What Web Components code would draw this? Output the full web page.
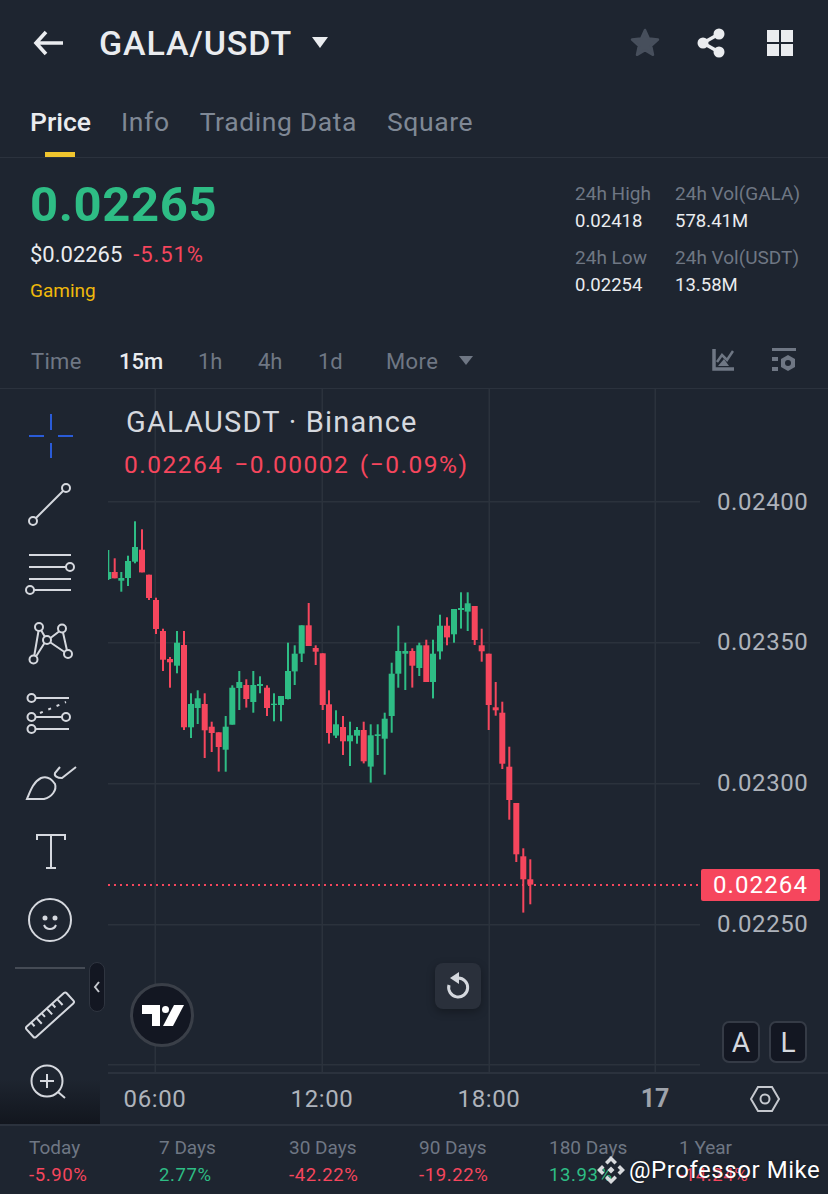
<!DOCTYPE html>
<html>
<head>
<meta charset="utf-8">
<title>GALA/USDT</title>
<style>
  html, body { margin: 0; background: #1e2530; }
  body { width: 828px; height: 1194px; overflow: hidden; font-family: Roboto, "Noto Sans", sans-serif; position: relative; }
</style>
</head>
<body>
<pair-header></pair-header>
<pair-tabs></pair-tabs>
<price-summary></price-summary>
<interval-bar></interval-bar>
<chart-panel></chart-panel>
<perf-strip></perf-strip>
<water-mark></water-mark>

<script>
class PairHeader extends HTMLElement {
  connectedCallback() {
    this.attachShadow({ mode: 'open' });
    this.shadowRoot.innerHTML = `
      <style>
        :host { display: flex; align-items: center; height: 85px; padding: 0 34px 0 33px; box-sizing: border-box; color: #eaecef; }
        .title { font-size: 34px; font-weight: 500; margin-left: 36px; letter-spacing: .9px; }
        .caret { margin-left: 20px; }
        .right { margin-left: auto; display: flex; align-items: center; }
        .share { margin: 0 39px 0 34px; }
      </style>
      <svg width="30" height="26" viewBox="0 0 30 26"><path d="M13 2 3 13l10 11M3 13h27" fill="none" stroke="#eaecef" stroke-width="3.6"/></svg>
      <span class="title">GALA/USDT</span>
      <svg class="caret" width="16" height="12" viewBox="0 0 16 12"><path d="M0 0h16L8 11z" fill="#eaecef"/></svg>
      <div class="right">
        <svg width="32" height="32" viewBox="0 0 32 32"><path d="M16 3l3.800 8.500 9.200 1-6.900 6.200 1.900 9.100L16 23.200l-8 4.600 1.900-9.100L3 12.500l9.200-1z" fill="#474f5c" stroke="#474f5c" stroke-width="2.500" stroke-linejoin="round"/></svg>
        <svg class="share" width="32" height="32" viewBox="0 0 32 32"><path d="M24 7 8 16l16 9" fill="none" stroke="#eaecef" stroke-width="3.500"/><circle cx="24" cy="7" r="5.500" fill="#eaecef"/><circle cx="8" cy="16" r="5.500" fill="#eaecef"/><circle cx="24" cy="25" r="5.500" fill="#eaecef"/></svg>
        <svg width="28" height="28" viewBox="0 0 28 28" fill="#eaecef"><rect x="1" y="1" width="12" height="12"/><rect x="15" y="1" width="12" height="12"/><rect x="1" y="15" width="12" height="12"/><rect x="15" y="15" width="12" height="12"/></svg>
      </div>`;
  }
}
customElements.define('pair-header', PairHeader);

class PairTabs extends HTMLElement {
  connectedCallback() {
    this.attachShadow({ mode: 'open' });
    this.shadowRoot.innerHTML = `
      <style>
        :host { display: flex; gap: 30px; height: 73px; padding: 0 30px; box-sizing: border-box; border-bottom: 1px solid #2b323d; font-size: 26.500px; color: #7f8895; letter-spacing: .6px; }
        span { position: relative; line-height: 74px; }
        .on { color: #eaecef; font-weight: 500; letter-spacing: 0; }
        .on::after { content: ''; position: absolute; left: 15px; bottom: 0; width: 30px; height: 5px; background: #f0c52e; }
      </style>
      <span class="on">Price</span><span>Info</span><span>Trading Data</span><span>Square</span>`;
  }
}
customElements.define('pair-tabs', PairTabs);

class PriceSummary extends HTMLElement {
  connectedCallback() {
    this.attachShadow({ mode: 'open' });
    this.shadowRoot.innerHTML = `
      <style>
        :host { display: flex; height: 172px; padding: 0 28px 0 30px; box-sizing: border-box; }
        .left { display: flex; flex-direction: column; }
        .big { font-size: 49px; font-weight: 700; color: #2ebd85; line-height: 58px; margin-top: 18px; letter-spacing: .6px; }
        .sub { font-size: 22px; line-height: 28px; margin-top: 7px; color: #eaecef; display: flex; gap: 11px; }
        .red { color: #f6465d; letter-spacing: .9px; }
        .tag { font-size: 19px; line-height: 24px; margin-top: 10px; color: #f0b90b; }
        .grid { margin-left: auto; display: grid; grid-template-columns: 100px auto; grid-auto-rows: auto; margin-top: 24px; align-content: start; }
        .l { font-size: 19px; color: #6f7784; line-height: 24px; }
        .v { font-size: 18.500px; color: #eaecef; line-height: 31px; margin-bottom: 9px; }
      </style>
      <div class="left">
        <div class="big">0.02265</div>
        <div class="sub"><span>$0.02265</span><span class="red">-5.51%</span></div>
        <div class="tag">Gaming</div>
      </div>
      <div class="grid">
        <div class="l">24h High</div><div class="l">24h Vol(GALA)</div>
        <div class="v">0.02418</div><div class="v">578.41M</div>
        <div class="l">24h Low</div><div class="l">24h Vol(USDT)</div>
        <div class="v">0.02254</div><div class="v">13.58M</div>
      </div>`;
  }
}
customElements.define('price-summary', PriceSummary);

class IntervalBar extends HTMLElement {
  connectedCallback() {
    this.attachShadow({ mode: 'open' });
    this.shadowRoot.innerHTML = `
      <style>
        :host { display: flex; align-items: center; height: 59px; padding: 4px 32px 0 31px; box-sizing: border-box; border-bottom: 1px solid #2b323d; font-size: 22px; color: #6f7784; }
        .i { width: 60px; }
        .on { color: #eaecef; font-weight: 500; width: 79px; }
        .t { width: 88px; letter-spacing: .3px; }
        .more { margin-left: 8px; margin-right: 21px; letter-spacing: .4px; }
        .right { margin-left: auto; display: flex; gap: 37px; align-items: center; }
      </style>
      <span class="t">Time</span><span class="on">15m</span><span class="i">1h</span><span class="i">4h</span><span class="i">1d</span>
      <span class="more">More</span>
      <svg width="14" height="10" viewBox="0 0 14 10"><path d="M0 0h14L7 9z" fill="#6f7784"/></svg>
      <div class="right">
        <svg width="22" height="24" viewBox="0 0 22 24" fill="none" stroke="#6f7784" stroke-width="3.500"><path d="M2 0v20h20"/><path d="M5 13l5-7 5 5 6-9" stroke-width="2.500"/><path d="M6 17l6-7 5 7z" fill="#6f7784" stroke="none"/></svg>
        <svg width="25" height="26" viewBox="0 0 25 26" fill="#6f7784"><rect x="1" y="0" width="24" height="3"/><rect x="1" y="9" width="6" height="4"/><rect x="1" y="19" width="6" height="4"/><path d="M17 7l7 4v8l-7 4-7-4v-8z"/><circle cx="17" cy="15" r="3" fill="#1e2530"/></svg>
      </div>`;
  }
}
customElements.define('interval-bar', IntervalBar);

// toolbar icons, each row is 70 tall and 100 wide
const TOOLS = [
  `<g stroke="#2a5bd7" stroke-width="2"><path d="M51 11v16M51 40v15M29 33h15M58 33h15"/></g>`,
  `<path d="M36 45 63 18"/><circle cx="33" cy="48" r="4"/><circle cx="66" cy="15" r="4"/>`,
  `<path d="M29 12h42M29 24h37M29 36h42M34 47h37"/><circle cx="70" cy="24" r="4"/><circle cx="30" cy="47" r="4"/>`,
  `<path d="M38.500 18 34.300 42.500M41 17 45 24M50.500 25 59 18.500M63 19.500 67 37.500M36 43.500 44.500 30M50.500 29.500 64.500 39"/><circle cx="39" cy="14" r="4"/><circle cx="62" cy="15.500" r="4"/><circle cx="47" cy="27" r="4"/><circle cx="33.500" cy="46.500" r="4"/><circle cx="68" cy="41" r="4"/>`,
  `<path d="M35 15h34M35.500 34h26.500M35 46h34"/><path d="M40 30 66 19" stroke-dasharray="3 6"/><circle cx="31.500" cy="15" r="4"/><circle cx="31.500" cy="34" r="4"/><circle cx="66" cy="34" r="4"/><circle cx="31.500" cy="46" r="4"/>`,
  `<path d="M27 46 C30 39 33 29 41 25 C46 23 51 25 55 31 C57 37 52 44 44 46 Z"/><path d="M60 14 55 20 C54 23 57 25 62 25 L76 14"/>`,
  `<path d="M37 17V12H65V17M51 12V45M46 45H56"/>`,
  `<circle cx="50" cy="27" r="21"/><circle cx="45" cy="25" r="1.500" fill="#d5d8de"/><circle cx="55" cy="25" r="1.500" fill="#d5d8de"/><path d="M44 32a6.500 6.500 0 0 0 12 0"/>`
];

class DrawToolbar extends HTMLElement {
  connectedCallback() {
    this.attachShadow({ mode: 'open' });
    const rows = TOOLS.map(body =>
      `<svg width="100" height="70" viewBox="0 0 100 70" fill="none" stroke="#d5d8de" stroke-width="2">${body}</svg>`).join('');
    this.shadowRoot.innerHTML = `
      <style>
        :host { display: flex; flex-direction: column; width: 100px; height: 735px; padding-top: 14px; box-sizing: border-box; position: relative; flex: none;
          background: linear-gradient(to bottom, transparent 690px, #12161e 735px); }
        svg { display: block; flex: none; }
        hr { border: 0; height: 2px; background: #454b55; margin: 4px 15px 0; }
        .pill { position: absolute; left: 89px; top: 573px; width: 16px; height: 50px; border-radius: 8px; box-sizing: border-box; background: #131722; border: 1px solid #2f3540; display: flex; align-items: center; justify-content: center; z-index: 2; }
      </style>
      ${rows}
      <hr>
      <svg width="100" height="70" viewBox="0 0 100 70" fill="none" stroke="#d5d8de" stroke-width="2">
        <g transform="rotate(-42 50 46)"><rect x="23" y="39" width="54" height="14" rx="2"/><path d="M31 39v5M38 39v8M45 39v5M52 39v8M59 39v5M66 39v8"/></g>
      </svg>
      <svg width="100" height="70" viewBox="0 0 100 70" fill="none" stroke="#d5d8de" stroke-width="2">
        <circle cx="47" cy="42" r="15.500"/><path d="M40 42h14M47 35v14M58 53l7 6"/>
      </svg>
      <div class="pill"><svg width="8" height="14" viewBox="0 0 8 14" fill="none" stroke="#c5c8ce" stroke-width="2"><path d="M6 2 2 7l4 5"/></svg></div>`;
  }
}
customElements.define('draw-toolbar', DrawToolbar);

// x, wickTop, wickBottom, bodyTop, bodyBottom, up: read off the reference at 3x
const LEFT = [
  [10,120,210,186,207,1],[29,145,205,186,205,0],[49,186,245,204,212,1],[69,137,228,153,204,1],[90,34,160,111,155,1],
  [111,58,187,119,187,0],[132,194,270,194,264,0],[153,263,372,270,357,0],[174,356,483,363,449,0],[195,441,533,447,457,0],
  [216,363,490,398,467,1],[237,363,660,405,652,0],[258,550,684,582,652,1],[278,541,642,565,594,1],[299,550,744,582,661,0],
  [320,635,726,650,669,0],[341,667,785,667,711,0],[362,618,785,650,719,1],[382,526,644,533,644,1],[403,483,600,516,534,1],
  [424,508,593,525,567,0],[445,483,608,525,576,1],[465,499,550,522,528,1],[486,526,618,533,594,0],[507,550,634,581,585,1],
  [528,558,634,558,585,1],[549,398,568,483,567,1],[569,406,525,431,484,1],[590,346,456,346,431,1],[611,279,408,346,408,0],
  [632,406,465,414,425,0]
];
const RIGHT = [
  [8,220,390,220,375,0],[27,331,491,373,459,0],[48,391,474,433,467,1],[69,408,525,441,484,0],[90,425,558,466,484,1],
  [111,441,491,450,467,1],[131,425,550,450,544,0],[152,433,608,466,560,1],[173,433,525,463,468,1],[194,398,584,416,476,1],
  [215,248,458,281,408,1],[235,137,323,213,281,1],[256,188,330,213,221,1],[277,205,323,213,257,0],[298,188,288,196,264,1],
  [319,179,306,196,306,0],[339,179,355,221,306,1],[360,104,238,137,214,1],[381,112,196,137,172,0],[402,87,188,87,163,1],
  [423,37,146,84,90,1],[443,37,153,70,95,1],[464,78,195,78,180,0],[485,146,245,196,214,0],[506,221,450,221,375,0],
  [527,306,407,382,391,0],[547,365,567,398,551,0],[568,500,719,560,660,0],[589,669,846,669,823,0],[610,805,998,829,898,0],
  [631,838,973,898,914,0]
];

class CandleChart extends HTMLElement {
  connectedCallback() {
    this.attachShadow({ mode: 'open' });
    const top = 389, left = 100;
    const candle = (ox, oy) => ([x, wt, wb, bt, bb, up]) => {
      const c = up ? '#2ebd85' : '#f6465d';
      const cx = ox + x / 3 - left, a = oy + wt / 3 - top, b = oy + wb / 3 - top, t = oy + bt / 3 - top, h = (bb - bt) / 3;
      return `<rect x="${(cx - 1).toFixed(1)}" y="${a.toFixed(1)}" width="2" height="${(b - a).toFixed(1)}" fill="${c}"/>` +
        `<rect x="${(cx - 3).toFixed(1)}" y="${t.toFixed(1)}" width="6" height="${h.toFixed(1)}" fill="${c}"/>`;
    };
    const candles = LEFT.map(candle(105, 510)).join('') + RIGHT.map(candle(320, 580)).join('');
    const hLines = [112, 253, 394, 535, 675].map(y => `<rect x="8" y="${y}" width="592" height="1.500"/>`).join('');
    const vLines = [54.500, 221.500, 388.500, 554.500].map(x => `<rect x="${x}" y="0" width="1.500" height="683"/>`).join('');
    const prices = [['0.02400', 121], ['0.02350', 261], ['0.02300', 402], ['0.02250', 543]]
      .map(([t, y]) => `<text x="617" y="${y}">${t}</text>`).join('');
    this.shadowRoot.innerHTML = `
      <style>
        :host { display: block; flex: 1; position: relative; height: 735px; }
        svg.plot { display: block; position: absolute; left: 0; top: 0; width: 728px; height: 735px; }
        .legend { position: absolute; left: 26px; top: 14px; color: #d5d8de; font-size: 29px; line-height: 38px; letter-spacing: 1.2px; }
        .legend .q { color: #f6465d; font-size: 24.500px; line-height: 34px; margin: 7px 0 0 -2px; letter-spacing: 1.5px; word-spacing: 3px; }
        .last { position: absolute; left: 601px; top: 480px; width: 119px; height: 32px; border-radius: 2px; background: #f6465d; color: #fff; font-size: 24px; line-height: 32px; text-align: center; letter-spacing: 1.1px; }
        .reset { position: absolute; left: 335px; top: 574px; width: 46px; height: 46px; border-radius: 8px; background: #2a303b; box-shadow: 0 3px 8px rgba(0,0,0,.3); display: flex; align-items: center; justify-content: center; }
        .logo { position: absolute; left: 30px; top: 594px; }
        .scale { position: absolute; top: 632px; width: 38px; height: 42px; border: 2px solid #353b46; border-radius: 7px; background: #131722; box-sizing: border-box; color: #d5d8de; font-size: 28px; line-height: 40px; text-align: center; }
        .axis { position: absolute; left: 8px; right: 0; top: 683px; height: 52px; border-top: 2px solid #2b323d; box-sizing: border-box; color: #aeb3bb; font-size: 24px; line-height: 50px; }
        .axis span { position: absolute; transform: translateX(-50%); letter-spacing: .6px; }
        .axis b { position: absolute; transform: translateX(-50%); left: 547px; color: #9ea3ab; font-size: 25px; }
        .axis svg { position: absolute; left: 642px; top: 10px; }
      </style>
      <svg class="plot" viewBox="0 0 728 735">
        <defs><clipPath id="pane"><rect x="8" y="0" width="592" height="683"/></clipPath></defs>
        <g fill="#2b323c">${hLines}${vLines}</g>
        <g clip-path="url(#pane)">${candles}</g>
        <path d="M8 496H600" stroke="#f6465d" stroke-width="2" stroke-dasharray="2 4"/>
        <g fill="#aeb3bb" font-size="24" letter-spacing=".6">${prices}</g>
      </svg>
      <div class="legend"><div>GALAUSDT · Binance</div><div class="q">0.02264 −0.00002 (−0.09%)</div></div>
      <div class="last">0.02264</div>
      <div class="reset"><svg width="26" height="28" viewBox="0 0 26 28" fill="none"><path d="M13 6a9.500 9.500 0 1 1-9 7" stroke="#d5d8de" stroke-width="3"/><path d="M14 0v12L5 6z" fill="#d5d8de"/></svg></div>
      <svg class="logo" width="66" height="66" viewBox="0 0 66 66"><circle cx="32" cy="32" r="30.500" fill="#131722" stroke="#3a3f48" stroke-width="3"/><path d="M12 22H30V43H22V31H12Z" fill="#fff"/><circle cx="35.500" cy="26.500" r="3.500" fill="#fff"/><path d="M44 22H54L43 43H33Z" fill="#fff"/></svg>
      <div class="scale" style="left:622px">A</div>
      <div class="scale" style="left:669px">L</div>
      <div class="axis">
        <span style="left:47px">06:00</span><span style="left:214px">12:00</span><span style="left:381px">18:00</span><b>17</b>
        <svg width="30" height="30" viewBox="0 0 30 30" fill="none" stroke="#c5c8ce" stroke-width="2"><path d="M8 3h14l7 12-7 12H8L1 15z"/><circle cx="15" cy="15" r="4.500"/></svg>
      </div>`;
  }
}
customElements.define('candle-chart', CandleChart);

class ChartPanel extends HTMLElement {
  connectedCallback() {
    this.attachShadow({ mode: 'open' });
    this.shadowRoot.innerHTML = `
      <style>:host { display: flex; height: 735px; border-bottom: 2px solid #2b323d; box-sizing: content-box; }</style>
      <draw-toolbar></draw-toolbar>
      <candle-chart></candle-chart>`;
  }
}
customElements.define('chart-panel', ChartPanel);

class PerfStrip extends HTMLElement {
  connectedCallback() {
    this.attachShadow({ mode: 'open' });
    const cols = [['Today', '-5.90%', 'd'], ['7 Days', '2.77%', 'u'], ['30 Days', '-42.22%', 'd'],
      ['90 Days', '-19.22%', 'd'], ['180 Days', '13.93%', 'u'], ['1 Year', '-14.24%', 'd']];
    this.shadowRoot.innerHTML = `
      <style>
        :host { display: grid; grid-template-columns: repeat(6, 130px); padding: 9px 0 0 29px; box-sizing: border-box; height: 68px; }
        .l { font-size: 19px; color: #6f7784; line-height: 26px; }
        .v { font-size: 18.500px; line-height: 28px; letter-spacing: .6px; }
        .u { color: #2ebd85; } .d { color: #f6465d; }
      </style>
      ${cols.map(([l, v, c]) => `<div><div class="l">${l}</div><div class="v ${c}">${v}</div></div>`).join('')}`;
  }
}
customElements.define('perf-strip', PerfStrip);

class WaterMark extends HTMLElement {
  connectedCallback() {
    this.attachShadow({ mode: 'open' });
    this.shadowRoot.innerHTML = `
      <style>
        :host { position: absolute; left: 597px; top: 1155px; display: flex; align-items: center; gap: 4px; color: #fff; font-size: 24px; line-height: 30px; letter-spacing: .55px; text-shadow: 0 0 2px rgba(0,0,0,.5); }
      </style>
      <svg width="28" height="28" viewBox="0 0 28 28" fill="#d8dadd"><path d="M14 0l6 6-2.500 2.500L14 5l-3.500 3.500L8 6zM5 9l2.500 2.500L5 14l2.500 2.500L5 19l-5-5zM23 9l5 5-5 5-2.500-2.500L23 14l-2.500-2.500zM14 10.500l3.500 3.500-3.500 3.500-3.500-3.500zM8 22l2.500-2.500L14 23l3.500-3.500L20 22l-6 6z"/></svg>
      <span>@Professor Mike</span>`;
  }
}
customElements.define('water-mark', WaterMark);
</script>
</body>
</html>
